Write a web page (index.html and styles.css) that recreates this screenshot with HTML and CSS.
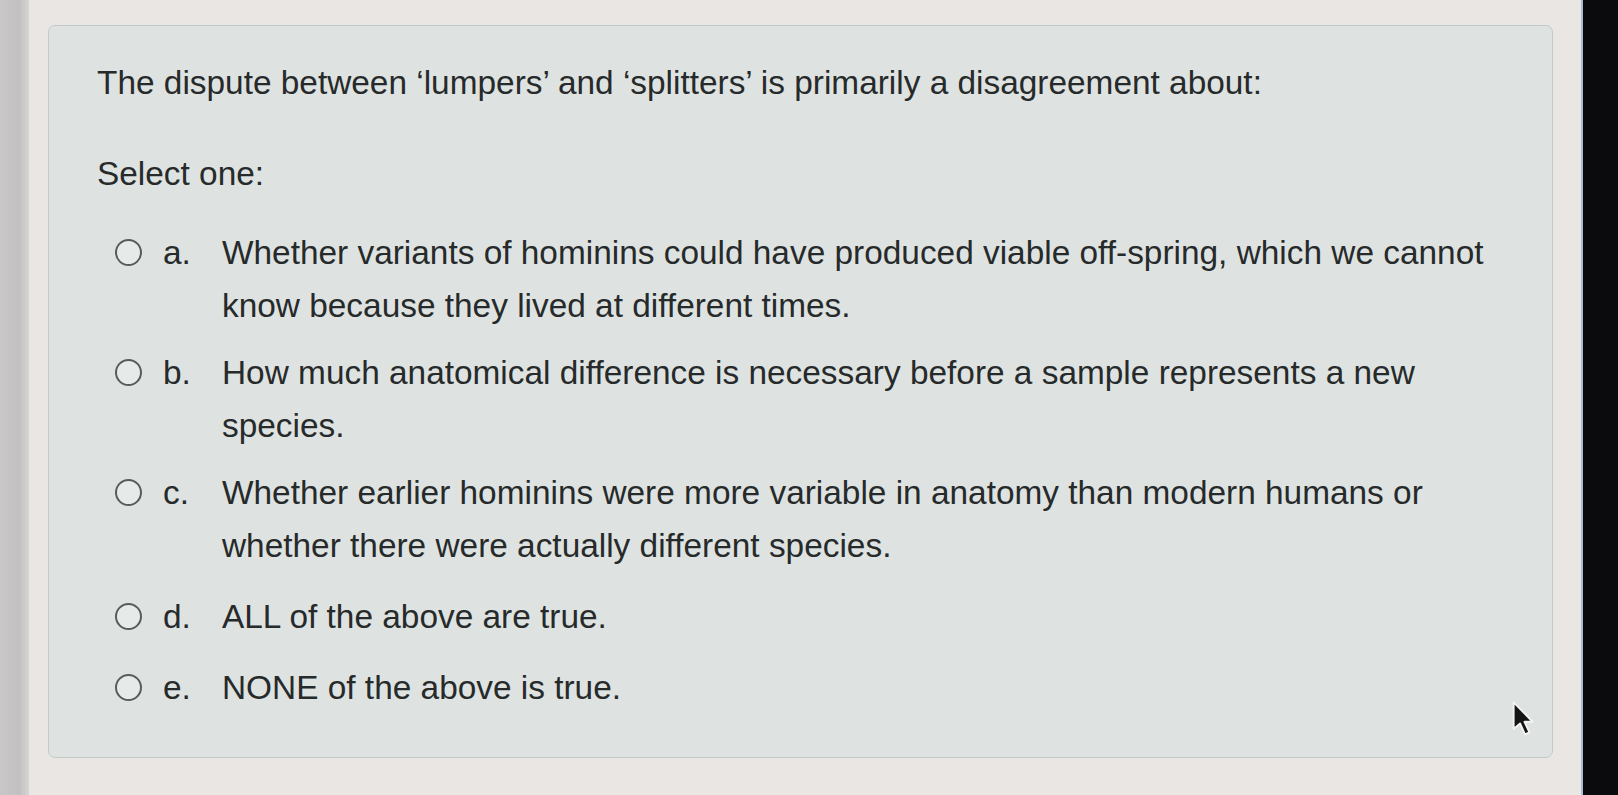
FILE: index.html
```html
<!DOCTYPE html>
<html lang="en">
<head>
<meta charset="utf-8">
<title>Quiz question</title>
<link rel="stylesheet" href="styles.css">
</head>
<body>
<div class="screen">
  <div class="strip-left"></div>
  <main class="page">
    <section class="card">
      <p class="question">The dispute between ‘lumpers’ and ‘splitters’ is primarily a disagreement about:</p>
      <p class="prompt">Select one:</p>
      <div class="options">
        <label class="option"><span class="radio"></span><span class="letter">a.</span><span class="text">Whether variants of hominins could have produced viable off-spring, which we cannot know because they lived at different times.</span></label>
        <label class="option"><span class="radio"></span><span class="letter">b.</span><span class="text">How much anatomical difference is necessary before a sample represents a new species.</span></label>
        <label class="option"><span class="radio"></span><span class="letter">c.</span><span class="text">Whether earlier hominins were more variable in anatomy than modern humans or whether there were actually different species.</span></label>
        <label class="option option-short"><span class="radio"></span><span class="letter">d.</span><span class="text">ALL of the above are true.</span></label>
        <label class="option option-short"><span class="radio"></span><span class="letter">e.</span><span class="text">NONE of the above is true.</span></label>
      </div>
    </section>
  </main>
  <div class="strip-right"></div>
  <svg class="cursor" width="24" height="36" viewBox="0 0 18 27"><path d="M2 1 L2 21 L6.8 16.8 L10.5 25 L13.8 23.6 L10.1 15.6 L16.2 15.6 Z" fill="#151515" stroke="#f4f4f4" stroke-width="1.4" stroke-linejoin="round"/></svg>
</div>
</body>
</html>
```

FILE: styles.css
```css
html, body {
  margin: 0;
  padding: 0;
  height: 100%;
  overflow: hidden;
}
body {
  font-family: "Liberation Sans", Arial, sans-serif;
  color: #272a2a;
}
.screen {
  position: relative;
  display: flex;
  width: 1618px;
  height: 795px;
  background: #e8e5e3;
}
.strip-left {
  width: 29px;
  flex: none;
  background: linear-gradient(90deg, #c9c7c7, #c2c0c0 65%, #d6d4d3);
}
.page {
  flex: 1;
  padding: 25px 0 0 19px;
  background: #e9e6e4;
}
.strip-right {
  width: 37px;
  flex: none;
  background: #0b0b0d;
  border-left: 2px solid #a9bdd4;
  box-sizing: border-box;
}
.card {
  box-sizing: border-box;
  width: 1505px;
  height: 733px;
  background: #dee3e2;
  border: 1px solid #c2cbca;
  border-radius: 7px;
  padding: 30px 50px 0 48px;
}
.question, .prompt {
  margin: 0;
  font-size: 33.4px;
  line-height: 53px;
}
.prompt {
  margin-top: 38px;
}
.options {
  margin-top: 26px;
  display: flex;
  flex-direction: column;
  gap: 14px;
}
.option {
  display: flex;
  align-items: flex-start;
  font-size: 33.4px;
  line-height: 53px;
}
.option-short {
  margin-top: 4px;
}
.radio {
  flex: none;
  box-sizing: border-box;
  width: 27px;
  height: 27px;
  margin: 13px 21px 0 18px;
  border: 2px solid #585b5b;
  border-radius: 50%;
  background: #e6eae9;
}
.letter {
  flex: none;
  width: 59px;
}
.text {
  flex: 1;
}
.cursor {
  position: absolute;
  left: 1511px;
  top: 701px;
}
```
